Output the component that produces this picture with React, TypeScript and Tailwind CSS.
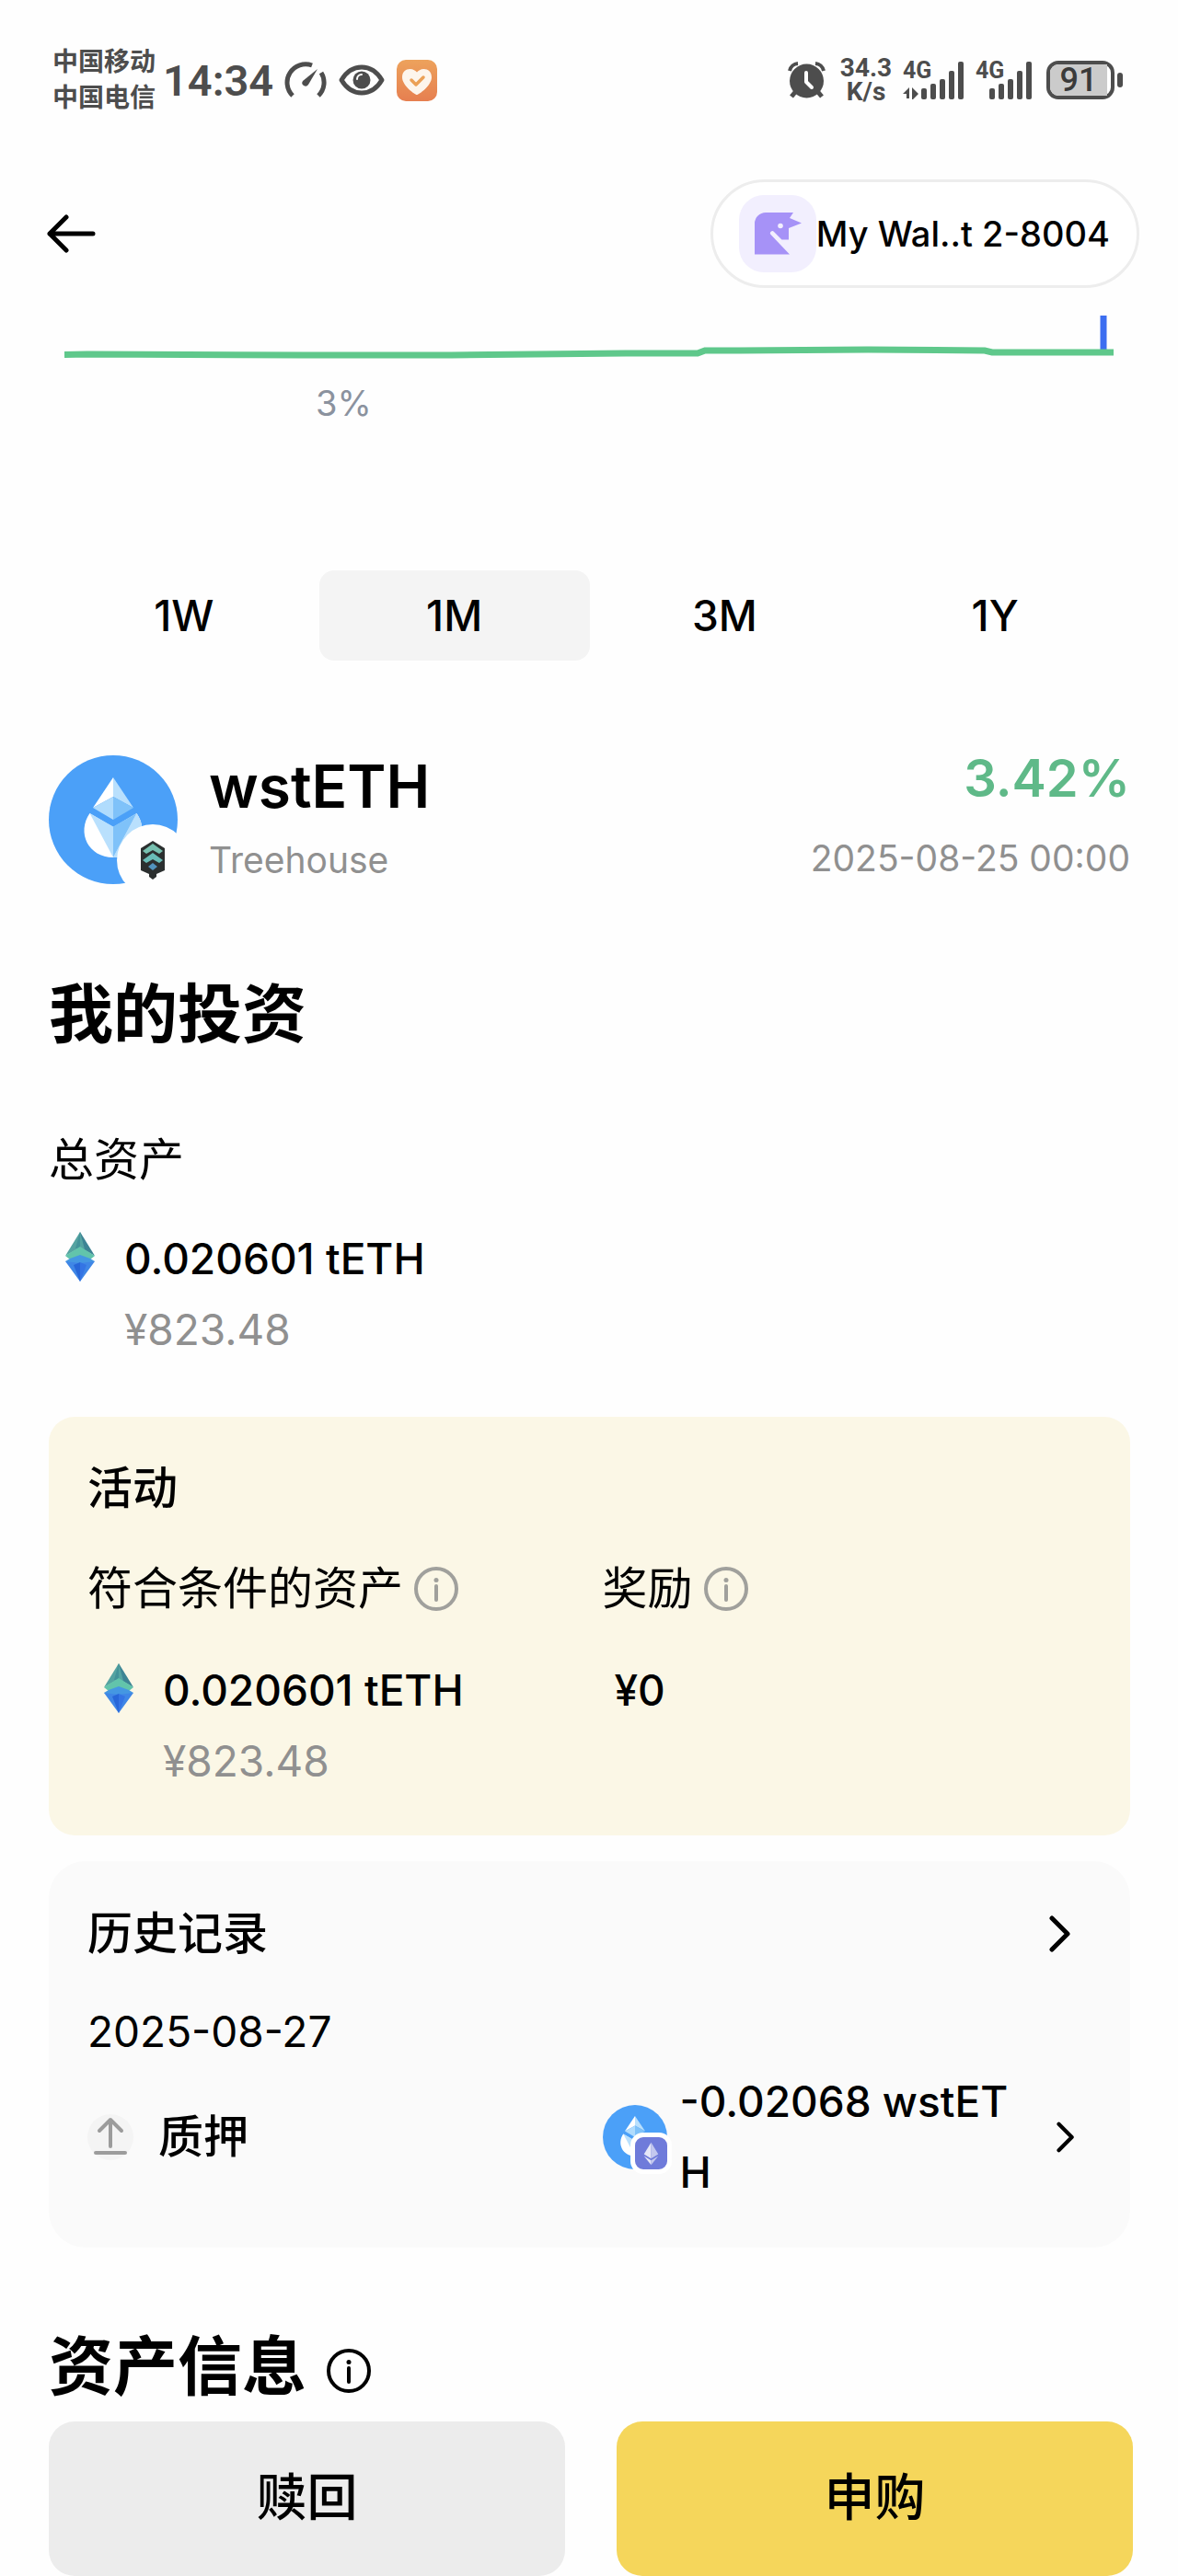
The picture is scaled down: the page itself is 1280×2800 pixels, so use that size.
import { useState } from "react";

const ranges = ["1W", "1M", "3M", "1Y"];

const GaugeIcon = () => (
  <svg viewBox="0 0 46 40" className="w-[46px] h-10" fill="none">
    <path d="M9 37A20 20 0 0 1 30 4" stroke="#4d4d4d" strokeWidth="5" />
    <path d="M40 12A20 20 0 0 1 37 37" stroke="#4d4d4d" strokeWidth="5" />
    <path d="M36 8 26 25a3.600 3.600 0 1 1-6-4z" fill="#4d4d4d" />
  </svg>
);

const EyeIcon = () => (
  <svg viewBox="0 0 50 34" className="w-[50px] h-[34px]" fill="none">
    <path
      d="M3 17C9 7 17 3 25 3s16 4 22 14c-6 10-14 14-22 14S9 27 3 17z"
      stroke="#4d4d4d"
      strokeWidth="5"
      strokeLinejoin="round"
    />
    <circle cx="25" cy="17" r="9.500" fill="#4d4d4d" />
    <path d="M20 16a5 5 0 0 1 5-5" stroke="#fff" strokeWidth="2" strokeLinecap="round" />
  </svg>
);

const HealthIcon = () => (
  <svg viewBox="0 0 44 45" className="w-11 h-[45px]">
    <defs>
      <linearGradient id="health" x1="0" y1="0" x2="0" y2="1">
        <stop offset="0" stopColor="#eda25c" />
        <stop offset="1" stopColor="#e67f50" />
      </linearGradient>
    </defs>
    <rect width="44" height="45" rx="10" fill="url(#health)" />
    <path
      d="M22 38c-2 0-16-10-16-19 0-6 4-9 8.500-9 3.500 0 6 2 7.500 3.500C23.500 12 26 10 29.500 10 34 10 38 13 38 19c0 9-14 19-16 19z"
      fill="#fdf5ec"
    />
    <path d="m16 22 5 5 8-8" fill="none" stroke="#eba056" strokeWidth="3.500" strokeLinecap="round" strokeLinejoin="round" />
  </svg>
);

const AlarmIcon = () => (
  <svg viewBox="0 0 41 40" className="w-[41px] h-10" fill="none">
    <path d="M2 10a10 10 0 0 1 9-8M39 10a10 10 0 0 0-9-8" stroke="#4d4d4d" strokeWidth="4" />
    <path d="m9 32-5 6M32 32l5 6" stroke="#4d4d4d" strokeWidth="5" />
    <circle cx="20.500" cy="21" r="18.500" fill="#4d4d4d" />
    <path d="M20 12v10l6 6" stroke="#fff" strokeWidth="4" strokeLinecap="round" strokeLinejoin="round" />
  </svg>
);

const Signal = ({ transfer = false }: { transfer?: boolean }) => (
  <div className="relative w-[66px] h-[42px]">
    <span className="absolute left-0 top-0 text-[25px] leading-[22px] font-bold">4G</span>
    <svg viewBox="0 0 66 42" className="w-full h-full" fill="#4d4d4d">
      {transfer && <path d="M0 36 7 29v12H4v-5zM10 29l7 7-6 6h-1z" />}
      <rect x={transfer ? 20 : 15} y="30" width="6" height="12" rx="2" />
      <rect x={transfer ? 30 : 25} y="25" width="6" height="17" rx="2" />
      <rect x={transfer ? 40 : 35} y="20" width="6" height="22" rx="2" />
      <rect x={transfer ? 50 : 45} y="11" width="6" height="31" rx="2" />
      <rect x={transfer ? 60 : 55} y="1" width="6" height="41" rx="2" />
    </svg>
  </div>
);

const UnicornIcon = () => (
  <svg viewBox="0 0 84 84" className="w-[84px] h-[84px]">
    <rect width="84" height="84" rx="27" fill="#f2effe" />
    <path
      d="M17 64.500V31a12 12 0 0 1 12-12h30l-4 6 13 5.500L54 36v12.500h-7.500L38 40a2.300 2.300 0 0 0-3.500 3L55 64.500z"
      fill="#a692f7"
    />
    <circle cx="45" cy="33.500" r="2.800" fill="#f2effe" />
  </svg>
);

const WstEthIcon = ({ className }: { className: string }) => (
  <svg viewBox="0 0 140 140" className={className}>
    <circle cx="70" cy="70" r="70" fill="#4ba0f8" />
    <path d="M44.500 63C30 84 43 111 70 111s40-27 25.500-48L70 78z" fill="#fff" />
    <path d="M95.500 63 70 111c27 0 40-27 25.500-48z" fill="#b9e0fd" />
    <path d="M44.500 63 70 77.500V111z" fill="#b9e0fd" />
    <path d="M95.500 63 70 77.500V111z" fill="#7fc2f9" />
    <path d="M70 24 48 57l22-12z" fill="#fff" />
    <path d="M70 24v21l22 12z" fill="#b9e0fd" />
    <path d="M70 45 48 57l22 13z" fill="#b0dcfd" />
    <path d="M70 45v25l22-13z" fill="#7fc2f9" />
  </svg>
);

const TreehouseIcon = () => (
  <svg viewBox="0 0 26 42" className="w-[26px] h-[42px]">
    <path d="m13 0 13 8v24l-9 4v3l-4 3-4-3v-3l-9-4V8z" fill="#2b2f2f" />
    <path d="m13 3 11 8-4 3-7-4-7 4-4-3z" fill="#77c0b0" />
    <path d="m13 13 11 8-4 3-7-4-7 4-4-3z" fill="#69bdb8" />
    <path d="m13 24 5 4-5 4-5-4z" fill="#5293bd" />
  </svg>
);

const GemIcon = () => (
  <svg viewBox="0 0 32 54" className="w-8 h-[54px]">
    <path d="M16 0 0 26l16-9z" fill="#55a3a1" />
    <path d="M16 0v17l16 9z" fill="#3d8494" />
    <path d="m16 0-5 18h5z" fill="#439399" />
    <path d="m16 0 5 19-5-2z" fill="#55a3a1" />
    <path d="M16 16 0 26l5 4 11 3 11-3 5-4z" fill="#62c4ab" />
    <path d="m16 25-11 4-5 3 16 8 16-8-5-3z" fill="#4497e2" />
    <path d="m0 32 16 22 16-22-16 2z" fill="#3f86e6" />
    <path d="m16 33-7 3 7 18z" fill="#2766d8" />
    <path d="m16 33 7 3-7 18z" fill="#3474e4" />
  </svg>
);

const InfoIcon = ({ className }: { className: string }) => (
  <svg viewBox="0 0 48 48" className={className} fill="none" stroke="currentColor">
    <circle cx="24" cy="24" r="22" strokeWidth="4" />
    <path d="M24 21v15" strokeWidth="4" strokeLinecap="round" />
    <circle cx="24" cy="14.500" r="2.500" fill="currentColor" stroke="none" />
  </svg>
);

const Chevron = ({ className }: { className: string }) => (
  <svg viewBox="0 0 24 40" className={className} fill="none">
    <path d="m3 3 17 17L3 37" stroke="#000" strokeWidth="5" strokeLinecap="round" strokeLinejoin="round" />
  </svg>
);

const Asset = () => (
  <div className="flex items-start pl-[18px] leading-[77px]">
    <div className="flex h-[71px] items-center">
      <GemIcon />
    </div>
    <div className="pl-8">
      <p className="font-medium">0.020601 tETH</p>
      <p className="text-[#909090]">¥823.48</p>
    </div>
  </div>
);

const StatusBar = () => (
  <div className="flex h-[78px] items-center justify-between pl-[57px] pr-[60px] font-[Roboto,'Noto_Sans_CJK_SC',sans-serif] text-[#4d4d4d]">
    <div className="flex items-center">
      <div className="text-[28px] leading-[39px] font-bold">
        <p>中国移动</p>
        <p>中国电信</p>
      </div>
      <span className="ml-2 w-[124px] text-[47px] leading-none font-semibold">14:34</span>
      <div className="flex items-center gap-[13px] pl-2">
        <GaugeIcon />
        <EyeIcon />
        <HealthIcon />
      </div>
    </div>
    <div className="flex items-center">
      <AlarmIcon />
      <div className="ml-3 w-[64px] text-center text-[28px] leading-[26px] font-bold">
        <p>34.3</p>
        <p>K/s</p>
      </div>
      <div className="flex gap-[13px] pl-2">
        <Signal transfer />
        <Signal />
      </div>
      <div className="ml-[11px] flex items-center gap-[3px]">
        <div className="flex h-[42px] w-[74px] items-center rounded-[13px] border-4 border-[#4d4d4d]">
          <div className="h-full w-[62px] rounded-l-[9px] bg-[#cbcbcb] text-center text-[36px] leading-[35px] font-medium text-[#3a3a3a]">
            91
          </div>
        </div>
        <div className="h-4 w-[6px] rounded-full bg-[#4d4d4d]" />
      </div>
    </div>
  </div>
);

const App = () => {
  const [range, setRange] = useState("1M");

  return (
    <div className="w-full bg-[#fefefe] pt-12 font-[Inter,'Noto_Sans_CJK_SC',sans-serif] text-[46px] text-black">
      <StatusBar />

      <header className="mt-[69px] flex items-center justify-between pl-[50px] pr-[42px]">
        <button aria-label="返回">
          <svg viewBox="0 0 54 42" className="w-[54px] h-[42px]" fill="none">
            <path d="M22 3 4 21l18 18M4 21h47" stroke="#000" strokeWidth="5" strokeLinecap="round" strokeLinejoin="round" />
          </svg>
        </button>
        <button className="flex h-[118px] items-center rounded-full border-[3px] border-[#ededed] bg-white pl-7 pr-[29px] text-[38px] font-medium">
          <UnicornIcon />
          My Wal..t 2-8004
        </button>
      </header>

      <div className="mt-[30px] px-[70px]">
        <svg viewBox="0 0 1140 48" className="w-full" fill="none">
          <path d="M1129 0v40" stroke="#3c6ef0" strokeWidth="7" />
          <path
            d="M0 42.500 25 42l235 1h160l190-2h78l8-3h37l140-1 127 1 8 2h132"
            stroke="#5fc88b"
            strokeWidth="7"
          />
        </svg>
      </div>
      <p className="mt-[27px] pl-[343px] text-[38px] leading-10 text-[#8b929e]">3%</p>

      <main className="pl-[53px] pr-[52px]">
        <div className="mt-[162px] grid grid-cols-4">
          {ranges.map((item) => (
            <button
              key={item}
              onClick={() => setRange(item)}
              className={`h-[98px] rounded-2xl font-medium ${range === item ? "bg-[#f4f4f4]" : ""}`}
            >
              {item}
            </button>
          ))}
        </div>

        <section className="mt-[103px] flex h-[140px] justify-between">
          <div className="flex">
            <div className="relative">
              <WstEthIcon className="w-[140px] h-[140px]" />
              <div className="absolute -right-[12px] -bottom-[13px] flex h-[78px] w-[78px] items-center justify-center rounded-full bg-[#fefefe]">
                <TreehouseIcon />
              </div>
            </div>
            <div className="flex flex-col justify-between pl-[34px]">
              <p className="text-[64px] leading-[68px] font-semibold">wstETH</p>
              <p className="text-[39px] leading-[52px] text-[#909090]">Treehouse</p>
            </div>
          </div>
          <div className="flex flex-col justify-between text-right">
            <p className="text-[56px] leading-[50px] font-semibold text-[#5fb988]">3.42%</p>
            <p className="text-[39px] leading-[56px] text-[#909090]">2025-08-25 00:00</p>
          </div>
        </section>

        <h2 className="mt-[102px] text-[70px] leading-20 font-bold">我的投资</h2>
        <h3 className="mt-[90px] text-[49px] leading-14">总资产</h3>
        <div className="mt-[41px]">
          <Asset />
        </div>

        <section className="mt-14 rounded-[28px] bg-[#fbf7e6] px-[42px] pt-[50px] pb-[42px]">
          <h3 className="text-[49px] leading-14 font-medium">活动</h3>
          <div className="mt-[53px] grid grid-cols-2 gap-x-7">
            <div className="flex items-center gap-3 text-[49px] leading-14">
              符合条件的资产
              <InfoIcon className="w-12 h-12 text-[#a0a09c]" />
            </div>
            <div className="flex items-center gap-3 text-[49px] leading-14">
              奖励
              <InfoIcon className="w-12 h-12 text-[#a0a09c]" />
            </div>
            <div className="mt-11">
              <Asset />
            </div>
            <p className="mt-11 pl-[13px] leading-[77px] font-medium">¥0</p>
          </div>
        </section>

        <section className="mt-7 rounded-[40px] bg-[#fafafa] px-[42px] pt-[51px] pb-[43px]">
          <div className="flex items-center justify-between pr-[22px]">
            <h3 className="text-[49px] leading-14 font-medium">历史记录</h3>
            <button aria-label="历史记录">
              <Chevron className="w-6 h-10" />
            </button>
          </div>
          <p className="mt-[50px] leading-14">2025-08-27</p>
          <div className="mt-[10px] grid grid-cols-2 items-center gap-x-7">
            <div className="flex items-center gap-[27px] text-[49px] leading-14 font-medium">
              <svg viewBox="0 0 50 50" className="w-[50px] h-[50px]" fill="none" stroke="#9c9c9c" strokeWidth="4">
                <circle cx="25" cy="25" r="25" fill="#f4f4f4" stroke="none" />
                <path d="M25 35V6M13 18 25 6l12 12M9 42h32" strokeLinecap="round" strokeLinejoin="round" />
              </svg>
              质押
            </div>
            <div className="flex items-center">
              <div className="relative shrink-0">
                <WstEthIcon className="w-[70px] h-[70px]" />
                <div className="absolute -right-[5px] -bottom-[5px] rounded-[14px] border-[5px] border-white bg-[#6f7bda]">
                  <svg viewBox="0 0 36 36" className="w-[35px] h-[35px]">
                    <path d="m18 6-8 13 8 5z" fill="#e6e8f8" />
                    <path d="m18 6 8 13-8 5z" fill="#c3c8ef" />
                    <path d="m10 21 8 5v5z" fill="#e6e8f8" />
                    <path d="m26 21-8 5v5z" fill="#c3c8ef" />
                  </svg>
                </div>
              </div>
              <p className="flex-1 pl-[14px] leading-[77px] font-medium break-all">-0.02068 wstETH</p>
              <button aria-label="质押" className="ml-8 mr-[18px]">
                <Chevron className="w-5 h-[34px]" />
              </button>
            </div>
          </div>
        </section>

        <div className="mt-[90px] flex items-center gap-[22px]">
          <h2 className="text-[70px] leading-20 font-bold">资产信息</h2>
          <InfoIcon className="mt-2 w-12 h-12" />
        </div>
      </main>

      <footer className="mt-[19px] grid grid-cols-2 gap-14 pl-[53px] pr-[49px] text-[55px] font-medium">
        <button className="h-[168px] rounded-[28px] bg-[#ececec] pb-1">赎回</button>
        <button className="h-[168px] rounded-[28px] bg-[#f5d65b] pb-1">申购</button>
      </footer>
    </div>
  );
};

export default App;
